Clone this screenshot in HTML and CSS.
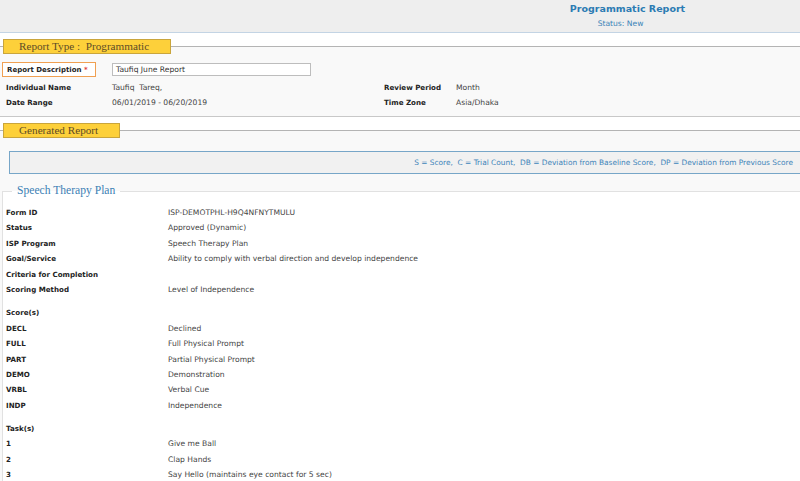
FILE: index.html
```html
<!DOCTYPE html>
<html>
<head>
<meta charset="utf-8">
<link rel="stylesheet" href="styles.css">
</head>
<body>
<header class="top">
  <div class="title">Programmatic Report</div>
  <div class="status">Status: New</div>
</header>

<fieldset class="sec sec1">
  <legend class="ylegend">Report Type :&nbsp; Programmatic</legend>
  <div class="descrow">
    <div class="desclabel">Report Description <span class="req">*</span></div>
    <div class="descinput">Taufiq June Report</div>
  </div>
  <div class="info">
    <div class="lbl">Individual Name</div><div class="val">Taufiq&nbsp; Tareq,</div>
    <div class="lbl">Review Period</div><div class="val">Month</div>
    <div class="lbl">Date Range</div><div class="val">06/01/2019 - 06/20/2019</div>
    <div class="lbl">Time Zone</div><div class="val">Asia/Dhaka</div>
  </div>
</fieldset>

<fieldset class="sec sec2">
  <legend class="ylegend">Generated Report</legend>
  <div class="keybox">S = Score,&nbsp; C = Trial Count,&nbsp; DB = Deviation from Baseline Score,&nbsp; DP = Deviation from Previous Score</div>
  <fieldset class="plan">
    <legend class="plegend">Speech Therapy Plan</legend>
    <div class="rows">
      <div class="lbl">Form ID</div><div class="val">ISP-DEMOTPHL-H9Q4NFNYTMULU</div>
      <div class="lbl">Status</div><div class="val">Approved (Dynamic)</div>
      <div class="lbl">ISP Program</div><div class="val">Speech Therapy Plan</div>
      <div class="lbl">Goal/Service</div><div class="val">Ability to comply with verbal direction and develop independence</div>
      <div class="lbl">Criteria for Completion</div><div class="val"></div>
      <div class="lbl">Scoring Method</div><div class="val">Level of Independence</div>
    </div>
    <div class="rows group">
      <div class="lbl">Score(s)</div><div class="val"></div>
      <div class="lbl">DECL</div><div class="val">Declined</div>
      <div class="lbl">FULL</div><div class="val">Full Physical Prompt</div>
      <div class="lbl">PART</div><div class="val">Partial Physical Prompt</div>
      <div class="lbl">DEMO</div><div class="val">Demonstration</div>
      <div class="lbl">VRBL</div><div class="val">Verbal Cue</div>
      <div class="lbl">INDP</div><div class="val">Independence</div>
    </div>
    <div class="rows group">
      <div class="lbl">Task(s)</div><div class="val"></div>
      <div class="lbl">1</div><div class="val">Give me Ball</div>
      <div class="lbl">2</div><div class="val">Clap Hands</div>
      <div class="lbl">3</div><div class="val">Say Hello (maintains eye contact for 5 sec)</div>
    </div>
  </fieldset>
</fieldset>
</body>
</html>
```

FILE: styles.css
```css
html, body {
  margin: 0;
  padding: 0;
  background: #ffffff;
  font-family: "DejaVu Sans", Verdana, sans-serif;
  font-size: 7px;
  color: #333;
  overflow: hidden;
}

.top {
  height: 33px;
  background: #eeeeee;
  border-bottom: 1px solid #c3d4e4;
  padding-left: 455px;
  text-align: center;
  box-sizing: border-box;
}
.title {
  padding-top: 2px;
  font-size: 9.5px;
  font-weight: bold;
  color: #2b7bb3;
  line-height: 14px;
}
.status {
  margin-top: 3px;
  padding-right: 14px;
  font-size: 7.6px;
  color: #3c84b8;
  line-height: 10px;
}

.sec {
  margin: 0;
  padding: 0;
  border: 0;
  border-top: 1px solid #b4b4b4;
  min-width: 0;
  background: #f9f9f9;
}
.sec1 {
  margin-top: 6px;
  border-bottom: 1px solid #c8c8c8;
  padding-bottom: 6px;
}
.sec2 {
  margin-top: 6px;
}

.ylegend {
  margin-left: 3px;
  padding: 0 21px 0 15px;
  height: 15px;
  box-sizing: border-box;
  background: #fdd03a;
  border: 1px solid #c9a53c;
  font-family: "Liberation Serif", "Times New Roman", serif;
  font-size: 11.2px;
  line-height: 13px;
  color: #5e4c27;
}

.descrow {
  display: flex;
  align-items: center;
  margin-top: 8px;
}
.desclabel {
  margin-left: 2px;
  width: 94px;
  height: 15px;
  box-sizing: border-box;
  border: 1px solid #f0a052;
  padding-left: 4px;
  font-weight: bold;
  color: #222;
  line-height: 14px;
  background: #fff;
}
.req { color: #e04040; }
.descinput {
  margin-left: 16px;
  width: 199px;
  height: 13px;
  box-sizing: border-box;
  border: 1px solid #bdbdbd;
  background: #fff;
  padding-left: 3px;
  line-height: 11px;
  font-size: 7.6px;
  color: #333;
}

.info {
  display: grid;
  grid-template-columns: 106px 272px 72px 1fr;
  align-items: baseline;
  margin-top: 3px;
  padding-left: 6px;
  grid-auto-rows: 15px;
  line-height: 15px;
}
.lbl {
  font-weight: bold;
  font-size: 7.1px;
  color: #222;
}
.val {
  color: #444;
  font-size: 7.6px;
}

.keybox {
  margin: 13px 0 0 9px;
  height: 23px;
  box-sizing: border-box;
  border: 1px solid #77a6c8;
  border-right: 0;
  background: #f1f1f1;
  text-align: right;
  padding-right: 7px;
  line-height: 21px;
  color: #3d84b9;
  font-size: 7.4px;
}

.plan {
  margin: 10px 0 0 2px;
  padding: 0 0 0 3px;
  border: 0;
  border-top: 1px solid #e1e1e1;
  border-left: 1px solid #e1e1e1;
  background: #ffffff;
  min-width: 0;
}
.plegend {
  margin-left: 6px;
  padding: 0 5px;
  font-family: "Liberation Serif", "Times New Roman", serif;
  font-size: 11.6px;
  line-height: 14px;
  color: #3c7fb5;
}

.rows {
  display: grid;
  grid-template-columns: 162px 1fr;
  align-items: baseline;
  grid-auto-rows: 15.4px;
  line-height: 15.4px;
  margin-top: 7px;
}
.rows.group {
  margin-top: 8px;
}
```
